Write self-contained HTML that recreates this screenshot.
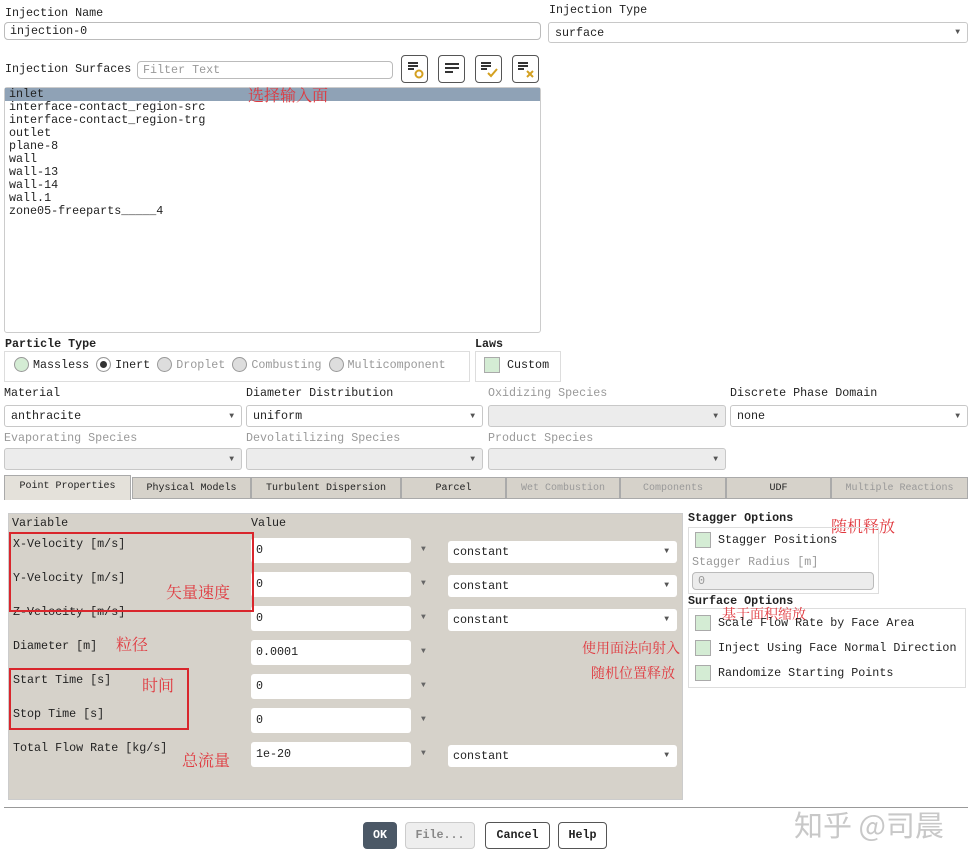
<!DOCTYPE html>
<html><head><meta charset="utf-8"><style>
*{box-sizing:border-box;margin:0;padding:0}
body{width:972px;height:864px;background:#fff;position:relative;overflow:hidden;font-family:"Liberation Mono","Noto Sans CJK SC",monospace;font-size:11.7px;color:#222}
.a{position:absolute;white-space:nowrap}
.in{position:absolute;background:#fff;border:1px solid #bbb;border-radius:4px;padding-left:5px;line-height:16px}
.sel{position:absolute;background:#fff;border:1px solid #c8c8c8;border-radius:3px;padding-left:6px;display:flex;align-items:center}
.sel:after{content:"▼";position:absolute;right:7px;font-size:8px;color:#555}
.dis{background:#ececec;color:#999}
.g{color:#999}
.btn{position:absolute;width:27px;height:28px;border:1px solid #555;border-radius:4px;background:#fff}
.rad{display:inline-block;width:15px;height:15px;border-radius:50%;border:1px solid #999;background:#d4ecd4;vertical-align:middle;margin-right:4px}
.rad.d{background:#ddd}
.cb{position:absolute;width:16px;height:16px;border:1px solid #aaa;background:#d4ecd4}
.tab{position:absolute;top:477px;height:22px;background:#d6d2ca;border:1px solid #aaa;font-size:10px;text-align:center;line-height:22px}
.vi{position:absolute;left:251px;width:160px;height:25px;background:#fff;border-radius:3px;padding-left:5px;line-height:25px}
.ar{position:absolute;left:421px;font-size:8px;color:#666}
.cs{position:absolute;left:448px;width:229px;height:22px;background:#fff;border-radius:3px;padding-left:5px;line-height:22px}
.cs:after{content:"▼";position:absolute;right:8px;font-size:8px;color:#555}
.red{position:absolute;color:#e0383e;font-family:"Noto Serif CJK SC","Noto Sans CJK SC",serif;font-size:16px;white-space:nowrap}
.rb{position:absolute;border:2px solid #d9262c}
.bt{position:absolute;top:822px;height:27px;border:1px solid #555;border-radius:4px;font-weight:bold;text-align:center;line-height:25px;background:#fff}
.row{position:absolute;left:9px;height:13px;line-height:13px}
</style></head><body>
<div class="a" style="left:5px;top:6px">Injection Name</div>
<div class="in" style="left:4px;top:22px;width:537px;height:18px">injection-0</div>
<div class="a" style="left:549px;top:3px">Injection Type</div>
<div class="sel" style="left:548px;top:22px;width:420px;height:21px">surface</div>
<div class="a" style="left:5px;top:62px">Injection Surfaces</div>
<div class="in g" style="left:137px;top:61px;width:256px;height:18px">Filter Text</div>
<div class="btn" style="left:401px;top:55px"><svg width="25" height="26"><path d="M6 7h10M6 10h10M6 13h6" stroke="#333" stroke-width="2"/><circle cx="17" cy="18" r="3.5" fill="none" stroke="#d4a020" stroke-width="2"/></svg></div>
<div class="btn" style="left:438px;top:55px"><svg width="25" height="26"><path d="M6 8h14M6 12h14M6 16h8" stroke="#333" stroke-width="2"/></svg></div>
<div class="btn" style="left:475px;top:55px"><svg width="25" height="26"><path d="M5 7h10M5 10h10M5 13h6" stroke="#333" stroke-width="2"/><path d="M12 17l3 3 6-7" fill="none" stroke="#d4a020" stroke-width="2"/></svg></div>
<div class="btn" style="left:512px;top:55px"><svg width="25" height="26"><path d="M5 7h10M5 10h10M5 13h6" stroke="#333" stroke-width="2"/><path d="M14 15l6 6M20 15l-6 6" stroke="#d4a020" stroke-width="2"/></svg></div>
<div class="a" style="left:4px;top:87px;width:537px;height:246px;border:1px solid #ccc;border-radius:3px"></div>
<div class="a" style="left:5px;top:88px;width:535px;height:13px;background:#8fa2b6"></div>
<div class="row" style="top:88px">inlet</div>
<div class="row" style="top:101px">interface-contact_region-src</div>
<div class="row" style="top:114px">interface-contact_region-trg</div>
<div class="row" style="top:127px">outlet</div>
<div class="row" style="top:140px">plane-8</div>
<div class="row" style="top:153px">wall</div>
<div class="row" style="top:166px">wall-13</div>
<div class="row" style="top:179px">wall-14</div>
<div class="row" style="top:192px">wall.1</div>
<div class="row" style="top:205px">zone05-freeparts_____4</div>
<div class="red" style="left:248px;top:83px">选择输入面</div>

<div class="a" style="left:5px;top:337px;font-weight:bold">Particle Type</div>
<div class="a" style="left:4px;top:351px;width:466px;height:31px;border:1px solid #ddd"></div>
<div class="a" style="left:14px;top:357px;line-height:17px"><span class="rad"></span>Massless <span class="rad" style="background:#fff;box-shadow:inset 0 0 0 3px #fff,inset 0 0 0 8px #333"></span>Inert <span class="rad d"></span><span class="g">Droplet</span> <span class="rad d"></span><span class="g">Combusting</span> <span class="rad d"></span><span class="g">Multicomponent</span></div>
<div class="a" style="left:475px;top:337px;font-weight:bold">Laws</div>
<div class="a" style="left:475px;top:351px;width:86px;height:31px;border:1px solid #ddd"></div>
<div class="cb" style="left:484px;top:357px"></div>
<div class="a" style="left:507px;top:358px">Custom</div>

<div class="a" style="left:4px;top:386px">Material</div>
<div class="a" style="left:246px;top:386px">Diameter Distribution</div>
<div class="a g" style="left:488px;top:386px">Oxidizing Species</div>
<div class="a" style="left:730px;top:386px">Discrete Phase Domain</div>
<div class="sel" style="left:4px;top:405px;width:238px;height:22px">anthracite</div>
<div class="sel" style="left:246px;top:405px;width:237px;height:22px">uniform</div>
<div class="sel dis" style="left:488px;top:405px;width:238px;height:22px"></div>
<div class="sel" style="left:730px;top:405px;width:238px;height:22px">none</div>
<div class="a g" style="left:4px;top:431px">Evaporating Species</div>
<div class="a g" style="left:246px;top:431px">Devolatilizing Species</div>
<div class="a g" style="left:488px;top:431px">Product Species</div>
<div class="sel dis" style="left:4px;top:448px;width:238px;height:22px"></div>
<div class="sel dis" style="left:246px;top:448px;width:237px;height:22px"></div>
<div class="sel dis" style="left:488px;top:448px;width:238px;height:22px"></div>

<div class="tab" style="left:4px;top:475px;height:25px;width:127px;background:#e4e1da;border-bottom:none">Point Properties</div>
<div class="tab" style="left:132px;width:119px">Physical Models</div>
<div class="tab" style="left:251px;width:150px">Turbulent Dispersion</div>
<div class="tab" style="left:401px;width:105px">Parcel</div>
<div class="tab g" style="left:506px;width:114px">Wet Combustion</div>
<div class="tab g" style="left:620px;width:106px">Components</div>
<div class="tab" style="left:726px;width:105px">UDF</div>
<div class="tab g" style="left:831px;width:137px">Multiple Reactions</div>

<div class="a" style="left:8px;top:513px;width:675px;height:287px;background:#d6d2ca;border:1px solid #ccc"></div>
<div class="a" style="left:12px;top:516px">Variable</div>
<div class="a" style="left:251px;top:516px">Value</div>
<div class="a" style="left:13px;top:537px">X-Velocity [m/s]</div>
<div class="a" style="left:13px;top:571px">Y-Velocity [m/s]</div>
<div class="a" style="left:13px;top:605px">Z-Velocity [m/s]</div>
<div class="a" style="left:13px;top:639px">Diameter [m]</div>
<div class="a" style="left:13px;top:673px">Start Time [s]</div>
<div class="a" style="left:13px;top:707px">Stop Time [s]</div>
<div class="a" style="left:13px;top:741px">Total Flow Rate [kg/s]</div>
<div class="vi" style="top:538px">0</div><div class="ar" style="top:545px">▼</div><div class="cs" style="top:541px">constant</div>
<div class="vi" style="top:572px">0</div><div class="ar" style="top:579px">▼</div><div class="cs" style="top:575px">constant</div>
<div class="vi" style="top:606px">0</div><div class="ar" style="top:613px">▼</div><div class="cs" style="top:609px">constant</div>
<div class="vi" style="top:640px">0.0001</div><div class="ar" style="top:647px">▼</div>
<div class="vi" style="top:674px">0</div><div class="ar" style="top:681px">▼</div>
<div class="vi" style="top:708px">0</div><div class="ar" style="top:715px">▼</div>
<div class="vi" style="top:742px">1e-20</div><div class="ar" style="top:749px">▼</div><div class="cs" style="top:745px">constant</div>

<div class="rb" style="left:9px;top:532px;width:245px;height:80px"></div>
<div class="rb" style="left:9px;top:668px;width:180px;height:62px"></div>
<div class="red" style="left:166px;top:580px">矢量速度</div>
<div class="red" style="left:116px;top:632px">粒径</div>
<div class="red" style="left:142px;top:673px">时间</div>
<div class="red" style="left:182px;top:748px">总流量</div>
<div class="red" style="left:582px;top:638px;font-size:14px">使用面法向射入</div>
<div class="red" style="left:591px;top:663px;font-size:14px">随机位置释放</div>

<div class="a" style="left:688px;top:511px;font-weight:bold">Stagger Options</div>
<div class="red" style="left:831px;top:514px">随机释放</div>
<div class="a" style="left:688px;top:527px;width:191px;height:67px;border:1px solid #ddd"></div>
<div class="cb" style="left:695px;top:532px"></div>
<div class="a" style="left:718px;top:533px">Stagger Positions</div>
<div class="a g" style="left:692px;top:555px">Stagger Radius [m]</div>
<div class="in g dis" style="left:692px;top:572px;width:182px;height:18px">0</div>
<div class="a" style="left:688px;top:594px;font-weight:bold">Surface Options</div>
<div class="a" style="left:688px;top:608px;width:278px;height:80px;border:1px solid #ddd"></div>
<div class="red" style="left:722px;top:604px;font-size:14px">基于面积缩放</div>
<div class="cb" style="left:695px;top:615px"></div><div class="a" style="left:718px;top:616px">Scale Flow Rate by Face Area</div>
<div class="cb" style="left:695px;top:640px"></div><div class="a" style="left:718px;top:641px">Inject Using Face Normal Direction</div>
<div class="cb" style="left:695px;top:665px"></div><div class="a" style="left:718px;top:666px">Randomize Starting Points</div>

<div class="a" style="left:4px;top:807px;width:964px;height:1px;background:#999"></div>
<div class="bt" style="left:363px;width:34px;background:#4b5866;color:#fff;border-color:#4b5866">OK</div>
<div class="bt" style="left:405px;width:70px;background:#eee;color:#888;border-color:#ccc">File...</div>
<div class="bt" style="left:485px;width:65px">Cancel</div>
<div class="bt" style="left:558px;width:49px">Help</div>
<div class="a" style="left:794px;top:803px;font-family:'Noto Sans CJK SC',sans-serif;font-size:29px;color:#c8c8c8">知乎 @司晨</div>
</body></html>
